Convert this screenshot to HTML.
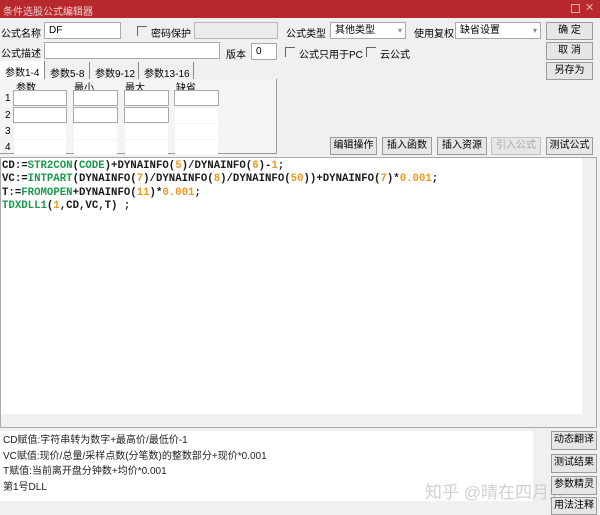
<!DOCTYPE html>
<html><head><meta charset="utf-8"><style>
*{margin:0;padding:0;box-sizing:border-box}
body{width:600px;height:515px;background:#f0f0f0;position:relative;overflow:hidden;font-family:"Liberation Sans","Noto Sans CJK SC",sans-serif;font-size:10px;color:#000}
.a{position:absolute}
.in{position:absolute;background:#fff;border:1px solid #a8a8a8;height:17px;padding:1px 4px;font-size:10px;line-height:14px}
.btn{position:absolute;background:#e6e6e6;border:1px solid #9a9a9a;height:18px;text-align:center;font-size:10px;line-height:16px}
.cb{position:absolute;width:10px;height:10px;border-left:1px solid #666;border-top:1px solid #666}
.code{position:absolute;left:2px;top:160px;font-family:"Liberation Mono",monospace;font-weight:bold;font-size:10.7px;line-height:13.4px;color:#1a1a1a;white-space:pre}
.g{color:#1a9a4a}.o{color:#e89a20}
.cell{position:absolute;background:#fff;border:1px solid #a8a8a8;width:54px;height:16px}
.cellw{position:absolute;background:#fff;width:54px;height:15px}
</style></head><body>
<div class="a" style="left:0;top:0;width:600px;height:18px;background:#b8292e"></div>
<div class="a" style="left:3px;top:3px;color:#f3d0d0;font-size:10px">条件选股公式编辑器</div>
<div class="a" style="left:571px;top:4px;width:9px;height:9px;border:1px solid #e8b0b0"></div>
<div class="a" style="left:585px;top:1px;color:#e8b0b0;font-size:11px">✕</div>

<div class="a" style="left:1px;top:25px">公式名称</div>
<div class="in" style="left:44px;top:22px;width:77px">DF</div>
<div class="cb" style="left:137px;top:26px"></div>
<div class="a" style="left:151px;top:25px">密码保护</div>
<div class="a" style="left:194px;top:22px;width:84px;height:17px;background:#ececec;border:1px solid #b8b8b8"></div>
<div class="a" style="left:286px;top:25px">公式类型</div>
<div class="in" style="left:330px;top:22px;width:76px">其他类型<span style="position:absolute;right:3px;top:1px;color:#888;font-size:8px">▾</span></div>
<div class="a" style="left:414px;top:25px">使用复权</div>
<div class="in" style="left:455px;top:22px;width:86px">缺省设置<span style="position:absolute;right:3px;top:1px;color:#888;font-size:8px">▾</span></div>
<div class="btn" style="left:546px;top:22px;width:47px">确 定</div>
<div class="btn" style="left:546px;top:42px;width:47px">取 消</div>
<div class="btn" style="left:546px;top:62px;width:47px">另存为</div>

<div class="a" style="left:1px;top:45px">公式描述</div>
<div class="in" style="left:44px;top:42px;width:176px"></div>
<div class="a" style="left:226px;top:46px">版本</div>
<div class="in" style="left:251px;top:43px;width:26px">0</div>
<div class="cb" style="left:285px;top:47px"></div>
<div class="a" style="left:299px;top:46px">公式只用于PC</div>
<div class="cb" style="left:366px;top:47px"></div>
<div class="a" style="left:380px;top:46px">云公式</div>

<div class="a" style="left:0;top:61px;width:45px;height:18px;background:#fff;border-right:1px solid #888"></div>
<div class="a" style="left:5px;top:64px">参数1-4</div>
<div class="a" style="left:50px;top:65px">参数5-8</div>
<div class="a" style="left:89px;top:62px;width:1px;height:17px;background:#888"></div>
<div class="a" style="left:95px;top:65px">参数9-12</div>
<div class="a" style="left:138px;top:62px;width:1px;height:17px;background:#888"></div>
<div class="a" style="left:144px;top:65px">参数13-16</div>
<div class="a" style="left:193px;top:62px;width:1px;height:17px;background:#888"></div>
<div class="a" style="left:0;top:79px;width:277px;height:75px;background:#f4f4f4;border-right:1px solid #999;border-bottom:1px solid #999"></div>
<div class="a" style="left:16px;top:79px">参数</div>
<div class="a" style="left:74px;top:79px">最小</div>
<div class="a" style="left:125px;top:79px">最大</div>
<div class="a" style="left:176px;top:79px">缺省</div>
<div class="a" style="left:5px;top:93px">1</div><div class="a" style="left:5px;top:110px">2</div><div class="a" style="left:5px;top:126px">3</div><div class="a" style="left:5px;top:142px">4</div>
<div class="cell" style="left:13px;top:90px"></div><div class="cell" style="left:73px;top:90px;width:45px"></div><div class="cell" style="left:124px;top:90px;width:45px"></div><div class="cell" style="left:174px;top:90px;width:45px"></div>
<div class="cell" style="left:13px;top:107px"></div><div class="cell" style="left:73px;top:107px;width:45px"></div><div class="cell" style="left:124px;top:107px;width:45px"></div><div class="cellw" style="left:175px;top:108px;width:43px"></div>
<div class="cellw" style="left:14px;top:124px;width:52px"></div><div class="cellw" style="left:74px;top:124px;width:43px"></div><div class="cellw" style="left:125px;top:124px;width:43px"></div><div class="cellw" style="left:175px;top:124px;width:43px"></div>
<div class="cellw" style="left:14px;top:140px;width:52px"></div><div class="cellw" style="left:74px;top:140px;width:43px"></div><div class="cellw" style="left:125px;top:140px;width:43px"></div><div class="cellw" style="left:175px;top:140px;width:43px"></div>

<div class="btn" style="left:330px;top:137px;width:47px">编辑操作</div>
<div class="btn" style="left:382px;top:137px;width:50px">插入函数</div>
<div class="btn" style="left:437px;top:137px;width:50px">插入资源</div>
<div class="btn" style="left:491px;top:137px;width:50px;color:#aaa;border-color:#c0c0c0">引入公式</div>
<div class="btn" style="left:546px;top:137px;width:47px">测试公式</div>

<div class="a" style="left:0;top:157px;width:597px;height:271px;border:1px solid #aaa;background:#f0f0f0"></div>
<div class="a" style="left:1px;top:158px;width:581px;height:256px;background:#fff"></div>
<div class="code">CD:=<span class="g">STR2CON</span>(<span class="g">CODE</span>)+DYNAINFO(<span class="o">5</span>)/DYNAINFO(<span class="o">6</span>)-<span class="o">1</span>;
VC:=<span class="g">INTPART</span>(DYNAINFO(<span class="o">7</span>)/DYNAINFO(<span class="o">8</span>)/DYNAINFO(<span class="o">50</span>))+DYNAINFO(<span class="o">7</span>)*<span class="o">0.001</span>;
T:=<span class="g">FROMOPEN</span>+DYNAINFO(<span class="o">11</span>)*<span class="o">0.001</span>;
<span class="g">TDXDLL1</span>(<span class="o">1</span>,CD,VC,T) ;</div>

<div class="a" style="left:0;top:431px;width:533px;height:70px;background:#fff"></div>
<div class="a" style="left:3px;top:433px;line-height:15.5px;font-size:10px;color:#222">CD赋值:字符串转为数字+最高价/最低价-1<br>VC赋值:现价/总量/采样点数(分笔数)的整数部分+现价*0.001<br>T赋值:当前离开盘分钟数+均价*0.001<br>第1号DLL</div>
<div class="a" style="left:425px;top:478px;color:#d0d0d0;font-size:17px">知乎 @晴在四月天</div>
<div class="btn" style="left:551px;top:431px;width:46px;height:19px">动态翻译</div>
<div class="btn" style="left:551px;top:454px;width:46px;height:19px">测试结果</div>
<div class="btn" style="left:551px;top:476px;width:46px;height:19px">参数精灵</div>
<div class="btn" style="left:551px;top:497px;width:46px;height:18px">用法注释</div>
</body></html>
